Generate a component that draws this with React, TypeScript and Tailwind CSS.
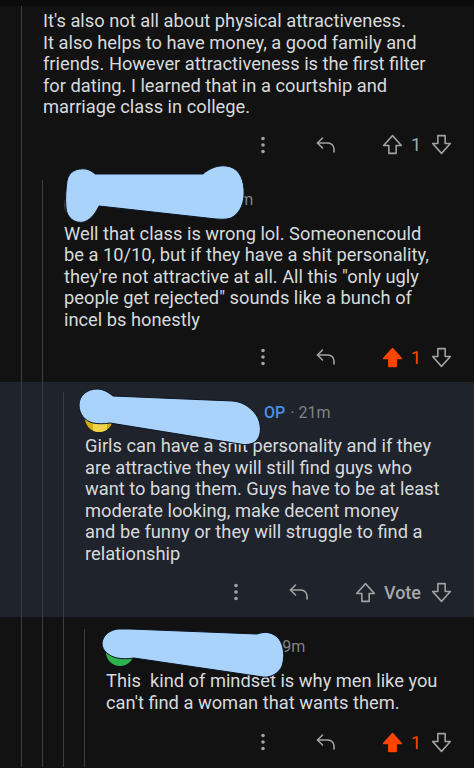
import React from 'react'

const FONT = { fontFamily: 'Roboto, "Noto Sans", sans-serif' }

// кнопки действий под комментарием
function Dots() {
  return (
    <svg width="24" height="24" viewBox="0 0 24 24" fill="#a3a3a3">
      <circle cx="12" cy="5.5" r="1.8" />
      <circle cx="12" cy="12" r="1.8" />
      <circle cx="12" cy="18.5" r="1.8" />
    </svg>
  )
}

function Reply() {
  return (
    <svg width="24" height="24" viewBox="0 0 24 24" fill="none" stroke="#a3a3a3" strokeWidth="1.6" strokeLinecap="round" strokeLinejoin="round">
      <path d="M8.5 5 L3.5 10 L8.5 15" />
      <path d="M3.5 10 H14 a6 6 0 0 1 6 6 V19" />
    </svg>
  )
}

function UpArrow({ active }: { active?: boolean }) {
  return (
    <svg width="25" height="25" viewBox="0 0 24 24" fill={active ? '#ff4500' : 'none'} stroke={active ? '#ff4500' : '#a3a3a3'} strokeWidth="1.5" strokeLinejoin="round">
      <path d="M8.5 20.5 V13 H3.5 L12 3.5 L20.5 13 H15.5 V20.5 Z" />
    </svg>
  )
}

function DownArrow() {
  return (
    <svg width="25" height="25" viewBox="0 0 24 24" fill="none" stroke="#a3a3a3" strokeWidth="1.5" strokeLinejoin="round">
      <path d="M8.5 3.5 V11 H3.5 L12 20.5 L20.5 11 H15.5 V3.5 Z" />
    </svg>
  )
}

function Actions({ count, upvoted, mt }: { count: string; upvoted?: boolean; mt: string }) {
  return (
    <div className={`flex h-[32px] items-center justify-end pr-[20px] ${mt}`}>
      <Dots />
      <div className="ml-[39px]">
        <Reply />
      </div>
      <div className="ml-[42px]">
        <UpArrow active={upvoted} />
      </div>
      <span
        className={`ml-[6px] text-[18px] ${count === 'Vote' ? 'font-medium text-[#a8a8a8]' : upvoted ? 'text-[#ff4500]' : 'text-[#a8a8a8]'}`}
      >
        {count}
      </span>
      <div className="ml-[8px]">
        <DownArrow />
      </div>
    </div>
  )
}

function Guides({ count, innerTop }: { count: number; innerTop?: string }) {
  const items = []
  for (let i = 0; i < count; i++) {
    const inner = i === count - 1 && innerTop
    items.push(
      <div key={i} className={`w-[21px] shrink-0 border-r border-[#3c3d3f] ${inner ? innerTop : ''}`} />
    )
  }
  return <div className="flex pl-px">{items}</div>
}

function Body({ lines, mt }: { lines: string[]; mt: string }) {
  return (
    <div className={`text-[18.3px] leading-[21.5px] text-[#d7dadc] whitespace-pre ${mt}`}>
      {lines.map((l, i) => (
        <div key={i}>{l}</div>
      ))}
    </div>
  )
}

export default function App() {
  return (
    <div className="relative h-[768px] w-[474px] overflow-hidden bg-[#121212]" style={FONT}>
      <div className="h-[6px] bg-[#0b0b0b]" />

      {/* комментарий 1 */}
      <div className="flex">
        <Guides count={1} />
        <div className="flex-1 pl-[21px] pt-[4px]">
          <Body
            mt=""
            lines={[
              "It's also not all about physical attractiveness.",
              'It also helps to have money, a good family and',
              'friends. However attractiveness is the first filter',
              'for dating. I learned that in a courtship and',
              'marriage class in college.',
            ]}
          />
          <Actions count="1" mt="mt-[11px]" />
        </div>
      </div>

      {/* комментарий 2 */}
      <div className="flex">
        <Guides count={2} innerTop="mt-[19px]" />
        <div className="flex-1 pl-[21px] pt-[26px] pb-[9px]">
          <div className="flex h-[26px] items-center text-[16px] text-[#818384]">
            <div className="mt-[10px] h-[28px] w-[28px] shrink-0 rounded-full bg-[#3a3b3d]" />
            <span className="ml-[6px] w-[118px] truncate text-[#a8a8a8]">username</span>
            <span className="ml-[6px]">· 1m</span>
          </div>
          <Body
            mt="mt-[10px]"
            lines={[
              'Well that class is wrong lol. Someonencould',
              'be a 10/10, but if they have a shit personality,',
              'they\'re not attractive at all. All this "only ugly',
              'people get rejected" sounds like a bunch of',
              'incel bs honestly',
            ]}
          />
          <Actions count="1" upvoted mt="mt-[11px]" />
        </div>
      </div>

      {/* комментарий OP */}
      <div className="flex bg-[#1f232c]">
        <Guides count={3} innerTop="mt-[10px]" />
        <div className="flex-1 pl-[21px] pt-[18px] pb-[9px]">
          <div className="flex h-[26px] items-center text-[16px] text-[#818384]">
            <div className="relative mt-[10px] h-[28px] w-[28px] shrink-0 overflow-hidden rounded-full bg-[#d6ae12]">
              <div className="absolute bottom-0 left-[8px] h-[9px] w-[14px] bg-[#f2d44a]" />
            </div>
            <span className="ml-[6px] w-[139px] truncate text-[#a8a8a8]">username</span>
            <span className="ml-[6px] font-medium text-[#4a90e2]">OP</span>
            <span className="ml-[5px]">·</span>
            <span className="ml-[4px]">21m</span>
          </div>
          <Body
            mt="mt-[9px]"
            lines={[
              'Girls can have a shit personality and if they',
              'are attractive they will still find guys who',
              'want to bang them. Guys have to be at least',
              'moderate looking, make decent money',
              'and be funny or they will struggle to find a',
              'relationship',
            ]}
          />
          <Actions count="Vote" mt="mt-[12px]" />
        </div>
      </div>

      {/* комментарий 4 */}
      <div className="flex">
        <Guides count={4} innerTop="mt-[12px]" />
        <div className="flex-1 pl-[21px] pt-[17px] pb-[9px]">
          <div className="flex h-[26px] items-center text-[16px] text-[#818384]">
            <div className="mt-[10px] h-[28px] w-[28px] shrink-0 rounded-full bg-[#2fb34f]" />
            <span className="ml-[6px] w-[128px] truncate text-[#a8a8a8]">username</span>
            <span className="ml-[6px]">· 9m</span>
          </div>
          <Body
            mt="mt-[10px]"
            lines={['This  kind of mindset is why men like you', "can't find a woman that wants them."]}
          />
          <Actions count="1" upvoted mt="mt-[13px]" />
        </div>
      </div>

      {/* закрашенные имена пользователей */}
      <svg className="pointer-events-none absolute left-0 top-0" width="474" height="768" viewBox="0 0 474 768">
        <g fill="#a9d3fa" stroke="#0b1420" strokeWidth="1">
          <path d="M67 181 C69 171 77 168 86 169 C90 170 93 172 95 174 L203 174 C210 168 218 165 226 166 C237 167 243 176 244 189 C245 201 241 213 231 218 C225 220 220 219 216 219 L99 206 C96 212 92 219 84 222 C75 224 67 218 66 208 C65 198 66 189 67 181 Z" />
          <path d="M79 405 C79 395 88 389 97 389 C103 389 108 392 113 396 L233 401 C244 402 253 409 258 418 C262 428 261 437 255 442 C250 445 244 445 240 444 L110 423 C104 424 98 424 93 423 C85 421 79 414 79 405 Z" />
          <path d="M102 643 C103 635 110 630 118 629 C122 629 126 629 130 629 L257 634 C265 631 273 632 279 639 C284 646 285 657 282 666 C279 673 271 678 263 677 L134 658 C128 659 122 659 117 658 C109 656 102 651 102 643 Z" />
        </g>
      </svg>
    </div>
  )
}
